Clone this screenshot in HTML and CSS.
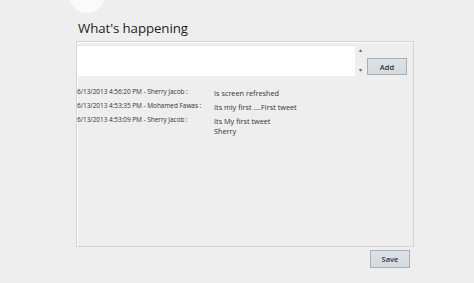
FILE: index.html
```html
<!DOCTYPE html>
<html>
<head>
<meta charset="utf-8">
<link rel="stylesheet" href="styles.css">
</head>
<body>
<div class="blob"></div>
<div class="page">
  <h1 class="title">What's happening</h1>
  <div class="panel">
    <div class="compose">
      <div class="input"></div>
      <div class="scroll"><span class="arr">&#9652;</span><span class="arr">&#9662;</span></div>
      <button class="btn add">Add</button>
    </div>
    <div class="log">
      <div class="row"><div class="meta">6/13/2013 4:56:20 PM - Sherry Jacob :</div><div class="msg">Is screen refreshed</div></div>
      <div class="row"><div class="meta">6/13/2013 4:53:35 PM - Mohamed Fawas :</div><div class="msg">Its miy first ....First tweet</div></div>
      <div class="row"><div class="meta">6/13/2013 4:53:09 PM - Sherry Jacob :</div><div class="msg">Its My first tweet<br>Sherry</div></div>
    </div>
  </div>
  <div class="footer"><button class="btn save">Save</button></div>
</div>
</body>
</html>
```
FILE: styles.css
```css
html, body { margin: 0; padding: 0; }
body {
  background: #eeeeee;
  width: 474px;
  height: 283px;
  overflow: hidden;
  position: relative;
  font-family: "Open Sans", "Noto Sans", sans-serif;
  color: #222;
}
.blob {
  position: absolute;
  left: 69px;
  top: -23px;
  width: 36px;
  height: 36px;
  border-radius: 50%;
  background: #fafafa;
}
.page {
  padding: 17px 0 0 76px;
  width: 338px;
}
.title {
  margin: 0 0 0 2px;
  font-size: 13.3px;
  font-weight: 400;
  line-height: 22px;
  height: 24px;
  color: #1e1e1e;
  letter-spacing: -0.1px;
}
.panel {
  box-sizing: border-box;
  width: 338px;
  height: 206px;
  border: 1px solid #d4d4d4;
  box-shadow: inset 1px 1px 0 #fafafa;
  display: flex;
  flex-direction: column;
}
.compose {
  display: flex;
  align-items: flex-start;
  padding-top: 3px;
}
.input {
  width: 278px;
  height: 30px;
  background: #fff;
  border-top: 1px solid #e6e6e6;
}
.scroll {
  width: 9px;
  height: 30px;
  display: flex;
  flex-direction: column;
  justify-content: space-between;
  align-items: center;
  font-size: 6px;
  color: #666;
  line-height: 10px;
  padding-left: 1px;
}
.btn {
  box-sizing: border-box;
  border: 1px solid #a9aeb3;
  background: linear-gradient(#dde3e8, #d3dae0);
  font-family: "Open Sans", "Noto Sans", sans-serif;
  font-size: 7.5px;
  font-weight: 600;
  color: #333;
  padding: 0;
}
.add {
  margin-left: 2px;
  margin-top: 13px;
  width: 40px;
  height: 17px;
}
.log {
  padding: 10px 0 0 0;
  display: flex;
  flex-direction: column;
}
.row {
  display: flex;
  margin-bottom: 2px;
}
.meta {
  width: 137px;
  font-size: 6.5px;
  line-height: 10px;
  color: #333;
  letter-spacing: -0.05px;
  padding-top: 1px;
}
.msg {
  font-size: 7.3px;
  line-height: 10px;
  padding-top: 2px;
  color: #333;
}
.footer {
  display: flex;
  justify-content: flex-end;
  padding-top: 3px;
  padding-right: 4px;
}
.save {
  width: 40px;
  height: 18px;
}
```
